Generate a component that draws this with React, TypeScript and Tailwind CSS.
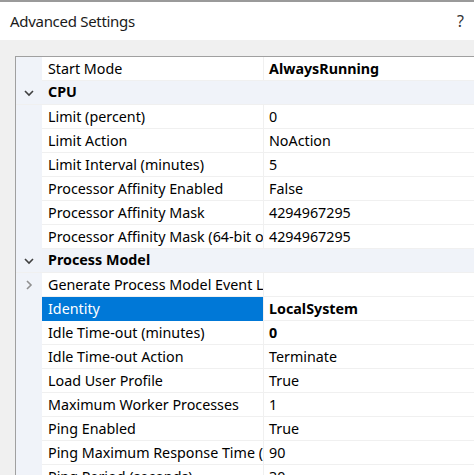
import React from "react";

type Row =
  | { kind: "cat"; label: string }
  | { kind: "prop"; label: string; value: string; bold?: boolean; expander?: boolean; selected?: boolean };

const rows: Row[] = [
  { kind: "prop", label: "Start Mode", value: "AlwaysRunning", bold: true },
  { kind: "cat", label: "CPU" },
  { kind: "prop", label: "Limit (percent)", value: "0" },
  { kind: "prop", label: "Limit Action", value: "NoAction" },
  { kind: "prop", label: "Limit Interval (minutes)", value: "5" },
  { kind: "prop", label: "Processor Affinity Enabled", value: "False" },
  { kind: "prop", label: "Processor Affinity Mask", value: "4294967295" },
  { kind: "prop", label: "Processor Affinity Mask (64-bit option)", value: "4294967295" },
  { kind: "cat", label: "Process Model" },
  { kind: "prop", label: "Generate Process Model Event Log Entry", value: "", expander: true },
  { kind: "prop", label: "Identity", value: "LocalSystem", bold: true, selected: true },
  { kind: "prop", label: "Idle Time-out (minutes)", value: "0", bold: true },
  { kind: "prop", label: "Idle Time-out Action", value: "Terminate" },
  { kind: "prop", label: "Load User Profile", value: "True" },
  { kind: "prop", label: "Maximum Worker Processes", value: "1" },
  { kind: "prop", label: "Ping Enabled", value: "True" },
  { kind: "prop", label: "Ping Maximum Response Time (seconds)", value: "90" },
  { kind: "prop", label: "Ping Period (seconds)", value: "30" },
];

const Chevron = ({ down }: { down: boolean }) =>
  down ? (
    <svg width="12" height="12" viewBox="0 0 12 12">
      <path d="M2 4 L6 8 L10 4" fill="none" stroke="#404040" strokeWidth="1.6" />
    </svg>
  ) : (
    <svg width="12" height="12" viewBox="0 0 12 12">
      <path d="M4 2 L8 6 L4 10" fill="none" stroke="#909090" strokeWidth="1.6" />
    </svg>
  );

export default function App() {
  return (
    <div
      className="w-[474px] h-[475px] overflow-hidden bg-white flex flex-col text-[#000]"
      style={{ fontFamily: '"Segoe UI", "Noto Sans", sans-serif' }}
    >
      <div className="h-[2px] bg-[#9a9a9a] shrink-0" />
      <div className="h-[38px] shrink-0 flex items-center justify-between pl-[10px] pr-[10px]">
        <span className="text-[15px] tracking-[-0.3px] text-[#1a1a1a]">Advanced Settings</span>
        <span className="text-[16px] text-[#333]">?</span>
      </div>
      <div className="flex-1 bg-[#f0f0f0] pt-[16px] pl-[15px]">
        <div className="border-l border-t border-[#a0a0a0] bg-white flex flex-col">
          {rows.map((r, i) =>
            r.kind === "cat" ? (
              <div key={i} className="h-[24px] flex bg-[#f0f3f9] border-b border-[#f0f0f0]">
                <div className="w-[26px] flex items-center justify-center">
                  <Chevron down />
                </div>
                <div className="pl-[6px] flex items-center font-bold text-[14.3px] leading-none">{r.label}</div>
              </div>
            ) : (
              <div key={i} className="h-[24px] flex">
                <div className="w-[26px] shrink-0 bg-[#f0f3f9] flex items-center justify-center">
                  {r.expander ? <Chevron down={false} /> : null}
                </div>
                <div
                  className={`w-[222px] shrink-0 pl-[6px] flex items-center text-[14.3px] whitespace-nowrap overflow-hidden border-r border-[#f0f0f0] ${
                    r.selected ? "bg-[#0078d7] text-white" : "border-b"
                  }`}
                >
                  {r.label}
                </div>
                <div
                  className={`flex-1 pl-[5px] flex items-center text-[14.3px] whitespace-nowrap border-b border-[#f0f0f0] ${
                    r.bold ? "font-bold" : ""
                  }`}
                >
                  {r.value}
                </div>
              </div>
            )
          )}
        </div>
      </div>
    </div>
  );
}
